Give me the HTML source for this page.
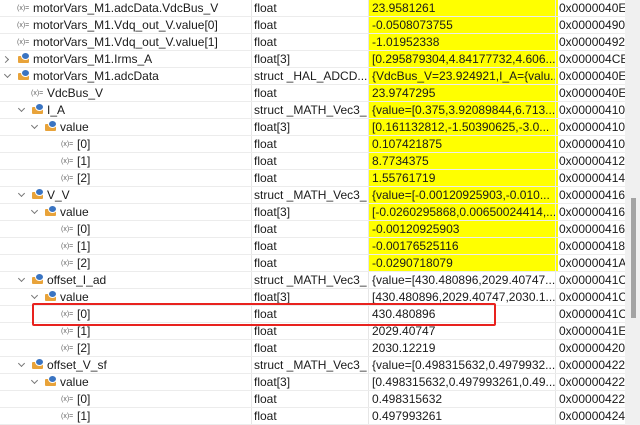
<!DOCTYPE html>
<html><head><meta charset="utf-8"><style>
body{margin:0;width:640px;height:425px;overflow:hidden;background:#fff;font-family:"Liberation Sans",sans-serif;font-size:12px;color:#1a1a1a;position:relative}
.r{position:absolute;left:0;width:625px;height:17px;border-bottom:1px solid #ececec;box-sizing:border-box}
.c{position:absolute;top:0;height:16px;line-height:17px;white-space:nowrap;overflow:hidden}
.n{left:0;width:250px}
.t{left:251px;width:116px;padding-left:2px;border-left:1px solid #e6e6e6}
.v{left:368px;width:186px;padding-left:3px;border-left:1px solid #e6e6e6}
.y{background:#ffff00}
.a{left:555px;width:70px;padding-left:3px;border-left:1px solid #e6e6e6}
.ar{position:absolute;top:5px;width:4px;height:4px;border-right:1px solid #777;border-bottom:1px solid #777}
.vi{position:absolute;top:0;font-size:7px;color:#666}
.fi{position:absolute;top:5px;width:11px;height:7px;background:#e8a33a;border-radius:1px}
.fi:after{content:"";position:absolute;left:3px;top:-4px;width:7px;height:6px;border-radius:50%;background:#3a74c2;border:1px solid #fff}
.sb{position:absolute;left:625px;top:0;width:15px;height:425px;background:#f0f0f0}
.th{position:absolute;left:631px;top:198px;width:5px;height:120px;background:#a3a3a3}
.box{position:absolute;left:32px;top:303px;width:460px;height:19px;border:2px solid #e8221e;border-radius:2px}
</style></head><body>
<div id="rows"></div>
<script>
var R=[
[0,0,"motorVars_M1.adcData.VdcBus_V","float","23.9581261","0x0000040E",1],
[0,0,"motorVars_M1.Vdq_out_V.value[0]","float","-0.0508073755","0x00000490",1],
[0,0,"motorVars_M1.Vdq_out_V.value[1]","float","-1.01952338","0x00000492",1],
[0,2,"motorVars_M1.Irms_A","float[3]","[0.295879304,4.84177732,4.606...","0x000004CE",1],
[0,1,"motorVars_M1.adcData","struct _HAL_ADCD...","{VdcBus_V=23.924921,I_A={valu...","0x0000040E",1],
[1,0,"VdcBus_V","float","23.9747295","0x0000040E",1],
[1,1,"I_A","struct _MATH_Vec3_","{value=[0.375,3.92089844,6.713...","0x00000410",1],
[2,1,"value","float[3]","[0.161132812,-1.50390625,-3.0...","0x00000410",1],
[3,0,"[0]","float","0.107421875","0x00000410",1],
[3,0,"[1]","float","8.7734375","0x00000412",1],
[3,0,"[2]","float","1.55761719","0x00000414",1],
[1,1,"V_V","struct _MATH_Vec3_","{value=[-0.00120925903,-0.010...","0x00000416",1],
[2,1,"value","float[3]","[-0.0260295868,0.00650024414,...","0x00000416",1],
[3,0,"[0]","float","-0.00120925903","0x00000416",1],
[3,0,"[1]","float","-0.00176525116","0x00000418",1],
[3,0,"[2]","float","-0.0290718079","0x0000041A",1],
[1,1,"offset_I_ad","struct _MATH_Vec3_","{value=[430.480896,2029.40747...","0x0000041C",0],
[2,1,"value","float[3]","[430.480896,2029.40747,2030.1...","0x0000041C",0],
[3,0,"[0]","float","430.480896","0x0000041C",0],
[3,0,"[1]","float","2029.40747","0x0000041E",0],
[3,0,"[2]","float","2030.12219","0x00000420",0],
[1,1,"offset_V_sf","struct _MATH_Vec3_","{value=[0.498315632,0.4979932...","0x00000422",0],
[2,1,"value","float[3]","[0.498315632,0.497993261,0.49...","0x00000422",0],
[3,0,"[0]","float","0.498315632","0x00000422",0],
[3,0,"[1]","float","0.497993261","0x00000424",0]];
var h="";
R.forEach(function(r,i){
 var L=r[0],k=r[1];
 var tx=[33,47,60,77][L];
 var ico="";
 if(k==0){ico='<span class="vi" style="left:'+(tx-16)+'px">(x)=</span>';}
 else{ico='<span class="fi" style="left:'+(tx-15)+'px"></span><span class="ar" style="left:'+(tx-28)+'px;'+(k==1?'transform:rotate(45deg);top:4px':'transform:rotate(-45deg);top:6px;left:'+(tx-30)+'px')+'"></span>';}
 h+='<div class="r" style="top:'+(i*17)+'px"><div class="c n">'+ico+'<span style="position:absolute;left:'+tx+'px">'+r[2]+'</span></div><div class="c t">'+r[3]+'</div><div class="c v'+(r[6]?' y':'')+'">'+r[4]+'</div><div class="c a">'+r[5]+'</div></div>';
});
document.getElementById("rows").innerHTML=h;
</script>
<div class="sb"></div><div class="th"></div>
<div class="box"></div>
</body></html>
